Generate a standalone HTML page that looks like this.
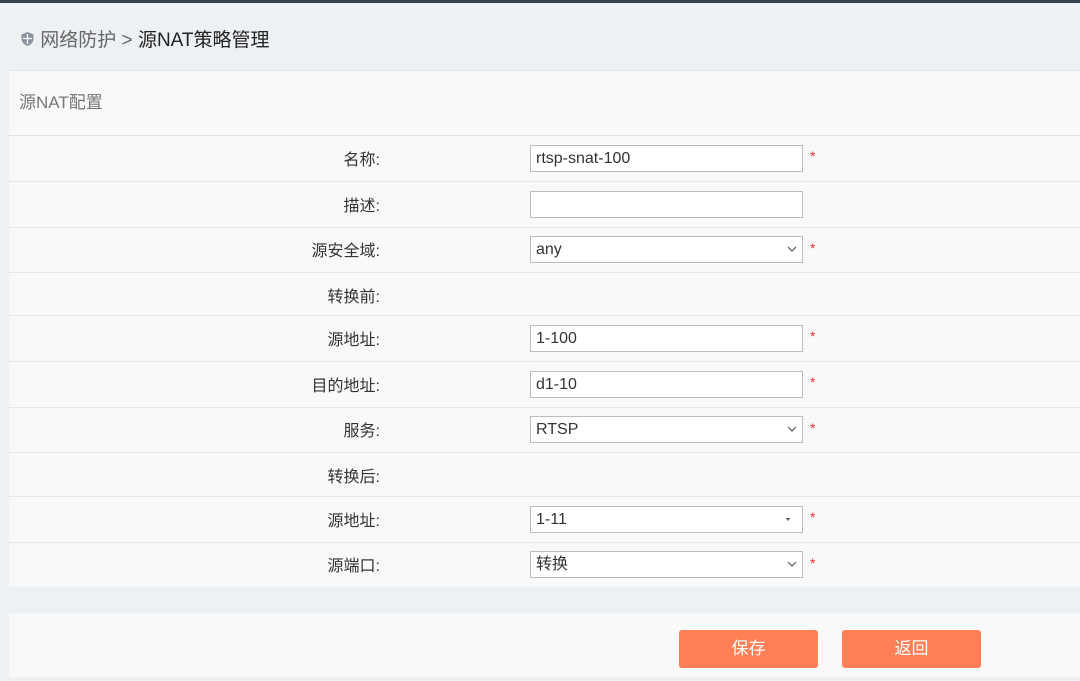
<!DOCTYPE html>
<html><head><meta charset="utf-8"><style>
body{margin:0;width:1080px;height:681px;background:#eef1f4;font-family:"Liberation Sans","Noto Sans CJK SC",sans-serif;position:relative;overflow:hidden}
.top{position:absolute;left:0;top:0;width:1080px;height:3px;background:#3a4350}
.bc{position:absolute;left:20px;top:25px;font-size:19px;color:#666}
.bc b{color:#222;font-weight:normal}
.panel{position:absolute;left:9px;top:70px;width:1071px;height:516px;background:#f9f9f9;border-top:1px solid #e3e3e3}
.hd{height:64px;line-height:64px;padding-left:10px;font-size:17px;color:#777;border-bottom:1px solid #e3e3e3}
.row{position:absolute;left:0;width:1071px;border-bottom:1px solid #e6e6e6}
.lbl{position:absolute;right:700px;font-size:16px;color:#333}
.in{position:absolute;left:521px;width:266px;height:25px;border:1px solid #bbb;background:#fff;font-size:16px;color:#333;line-height:25px;padding-left:5px;box-sizing:content-box}
.ar{position:absolute;right:4px;top:6px}
.st{position:absolute;left:801px;color:#e33;font-size:14px}
.foot{position:absolute;left:9px;top:613px;width:1071px;height:64px;background:#f9f9f9}
.btn{position:absolute;top:17px;width:139px;height:38px;background:#ff7f57;border-radius:3px;color:#fff;font-size:17px;text-align:center;line-height:38px}
</style></head><body>
<div class="top"></div>
<div class="bc"><svg width="15" height="16" viewBox="0 0 15 16" style="vertical-align:-1px"><path d="M7.5 1L1.5 3.5v4c0 4 3 6.5 6 7.5 3-1 6-3.5 6-7.5v-4z" fill="#8a94a0"/><path d="M7.5 3v10M3 7.5h9" stroke="#fff" stroke-width="1.3"/></svg> 网络防护 &gt; <b>源NAT策略管理</b></div>
<div class="panel">
<div class="hd">源NAT配置</div>
<div class="row" style="top:65px;height:45px"><span class="lbl" style="top:10px">名称:</span><div class="in" style="top:9px">rtsp-snat-100</div><span class="st" style="top:12px">*</span></div>
<div class="row" style="top:111px;height:45px"><span class="lbl" style="top:10px">描述:</span><div class="in" style="top:9px"></div></div>
<div class="row" style="top:157px;height:44px"><span class="lbl" style="top:9px">源安全域:</span><div class="in" style="top:8px">any<svg class="ar" width="12" height="12" viewBox="0 0 12 12"><path d="M2 4l4 4 4-4" stroke="#555" stroke-width="1.2" fill="none"/></svg></div><span class="st" style="top:12px">*</span></div>
<div class="row" style="top:202px;height:42px"><span class="lbl" style="top:10px">转换前:</span></div>
<div class="row" style="top:245px;height:45px"><span class="lbl" style="top:10px">源地址:</span><div class="in" style="top:9px">1-100</div><span class="st" style="top:12px">*</span></div>
<div class="row" style="top:291px;height:45px"><span class="lbl" style="top:10px">目的地址:</span><div class="in" style="top:9px">d1-10</div><span class="st" style="top:12px">*</span></div>
<div class="row" style="top:337px;height:44px"><span class="lbl" style="top:9px">服务:</span><div class="in" style="top:8px">RTSP<svg class="ar" width="12" height="12" viewBox="0 0 12 12"><path d="M2 4l4 4 4-4" stroke="#555" stroke-width="1.2" fill="none"/></svg></div><span class="st" style="top:12px">*</span></div>
<div class="row" style="top:382px;height:43px"><span class="lbl" style="top:10px">转换后:</span></div>
<div class="row" style="top:426px;height:45px"><span class="lbl" style="top:10px">源地址:</span><div class="in" style="top:9px">1-11<svg class="ar" width="12" height="12" viewBox="0 0 12 12" style="right:8px"><path d="M3.5 5h5l-2.5 3z" fill="#666"/></svg></div><span class="st" style="top:12px">*</span></div>
<div class="row" style="top:472px;height:43px;border:none"><span class="lbl" style="top:9px">源端口:</span><div class="in" style="top:8px">转换<svg class="ar" width="12" height="12" viewBox="0 0 12 12"><path d="M2 4l4 4 4-4" stroke="#555" stroke-width="1.2" fill="none"/></svg></div><span class="st" style="top:12px">*</span></div>
</div>
<div class="foot"><div class="btn" style="left:670px">保存</div><div class="btn" style="left:833px">返回</div></div>
</body></html>
